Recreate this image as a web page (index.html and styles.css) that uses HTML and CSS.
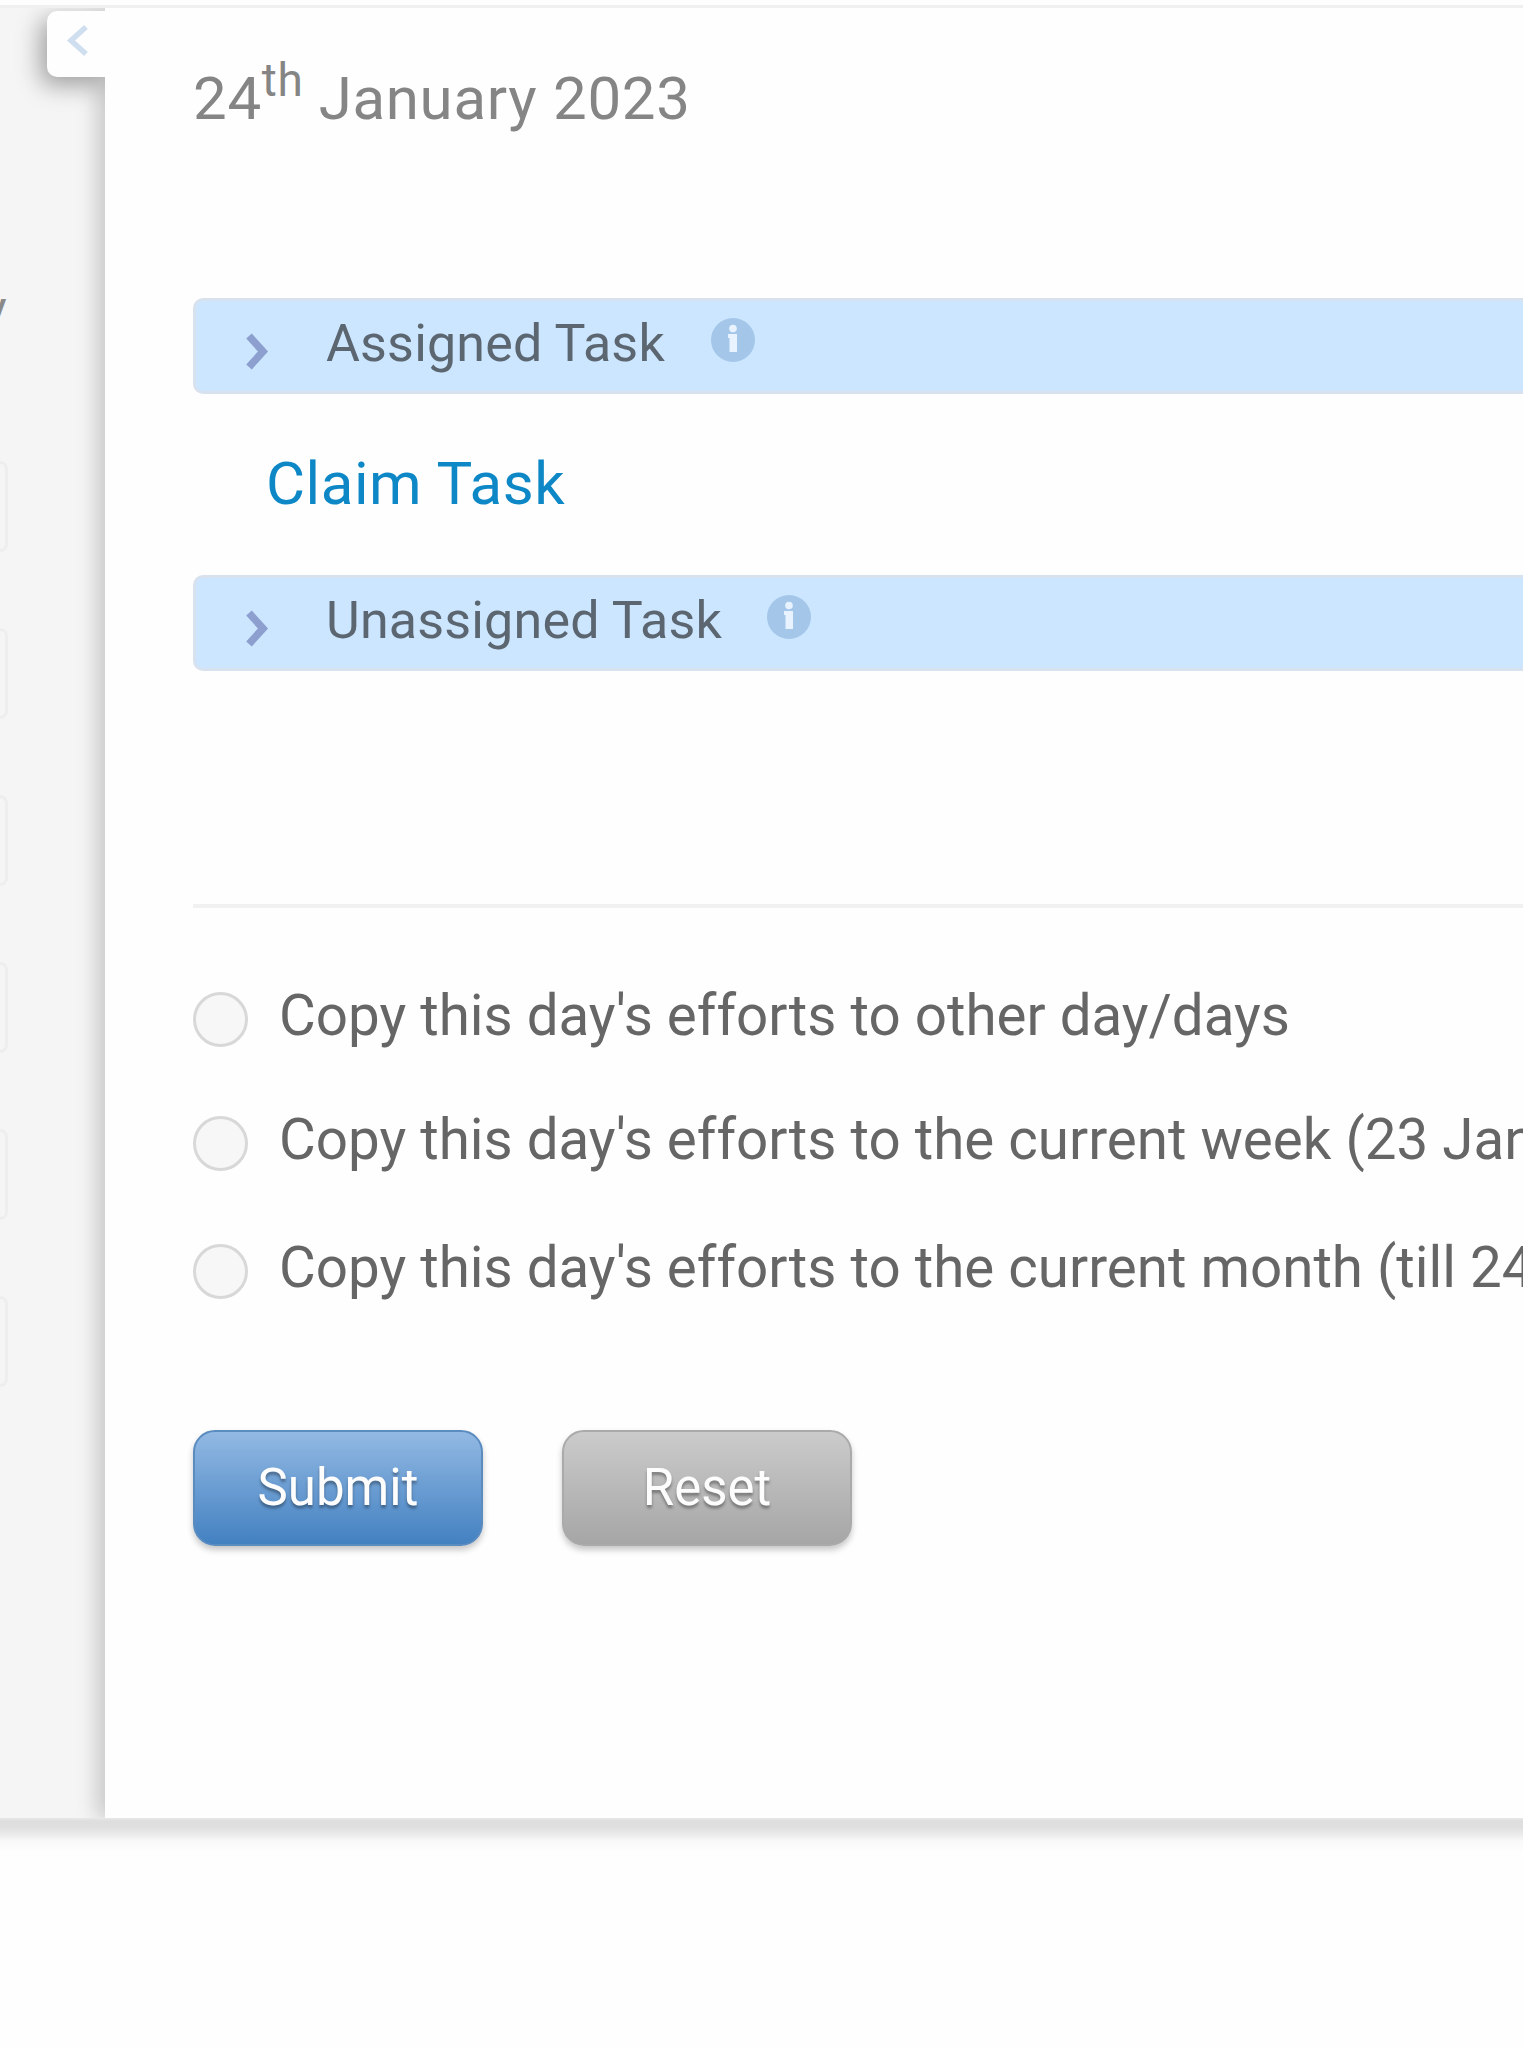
FILE: index.html
```html
<!DOCTYPE html>
<html lang="en">
<head>
<meta charset="utf-8">
<title>Timesheet</title>
<link rel="stylesheet" href="styles.css">
</head>
<body>
<div class="frame">
  <aside class="sidebar">
    <div class="sidebar-label"><span>Day</span></div>
    <div class="fields">
      <div class="field"></div>
      <div class="field"></div>
      <div class="field"></div>
      <div class="field"></div>
      <div class="field"></div>
      <div class="field"></div>
    </div>
  </aside>
  <main class="panel">
    <div class="collapse">
      <svg width="24" height="36" viewBox="0 0 24 36"><path d="M20 4L5 17.5L20 31" fill="none" stroke="#cfdfef" stroke-width="5.5"/></svg>
    </div>
    <h1 class="date"><span>24</span><sup>th</sup><span class="month">January 2023</span></h1>
    <section class="bar">
      <svg class="chevron" width="28" height="40" viewBox="0 0 28 40"><path d="M5 4L19 19.500L5 35" fill="none" stroke="#8c9fcf" stroke-width="7.500"/></svg>
      <span class="bar-title assigned">Assigned Task</span>
      <svg class="info" width="46" height="46" viewBox="0 0 46 46"><circle cx="23" cy="23" r="22" fill="#a3c6e9"/><circle cx="23" cy="11.500" r="3.800" fill="#e8f3ff"/><path d="M18 17H27V35H19.500V21H18Z" fill="#e8f3ff"/></svg>
    </section>
    <a class="claim">Claim Task</a>
    <section class="bar">
      <svg class="chevron" width="28" height="40" viewBox="0 0 28 40"><path d="M5 4L19 19.500L5 35" fill="none" stroke="#8c9fcf" stroke-width="7.500"/></svg>
      <span class="bar-title unassigned">Unassigned Task</span>
      <svg class="info" width="46" height="46" viewBox="0 0 46 46"><circle cx="23" cy="23" r="22" fill="#a3c6e9"/><circle cx="23" cy="11.500" r="3.800" fill="#e8f3ff"/><path d="M18 17H27V35H19.500V21H18Z" fill="#e8f3ff"/></svg>
    </section>
    <div class="rule"></div>
    <div class="options">
      <label class="option"><i class="radio"></i><span>Copy this day's efforts to other day/days</span></label>
      <label class="option"><i class="radio"></i><span>Copy this day's efforts to the current week (23 Jan</span></label>
      <label class="option"><i class="radio"></i><span>Copy this day's efforts to the current month (till 24</span></label>
    </div>
    <div class="actions">
      <button class="btn submit">Submit</button>
      <button class="btn reset">Reset</button>
    </div>
  </main>
</div>
<div class="frame-shadow"></div>
</body>
</html>
```
FILE: styles.css
```css
* { box-sizing: border-box; }
body {
  margin: 0;
  height: 2048px;
  padding-top: 5px;
  overflow: hidden;
  background: #fefefe;
  font-family: Roboto, "Liberation Sans", sans-serif;
  color: #666;
}
svg { display: block; flex: none; }
.frame {
  display: flex;
  height: 1813px;
  border-top: 3px solid #f0f0f0;
}
.frame-shadow {
  height: 34px;
  background: linear-gradient(#e8e8e8, #dedede 3px, #dfdfdf 9px, #ececec 17px, #f9f9f9 23px, #fefefe);
}
.sidebar {
  flex: none;
  width: 105px;
  padding-top: 272px;
  background: #f5f5f5;
  overflow: hidden;
}
.sidebar-label {
  display: flex;
  justify-content: flex-end;
  width: 6px;
  height: 50px;
  line-height: 50px;
  font-size: 32px;
  font-weight: 700;
  color: #8a8a8a;
}
.fields {
  display: flex;
  flex-direction: column;
  gap: 76px;
  padding-top: 131px;
}
.field {
  width: 8px;
  height: 91px;
  border: 3px solid #eee;
  border-left: 0;
  border-radius: 0 9px 9px 0;
}
.panel {
  position: relative;
  flex: 1;
  min-width: 0;
  padding: 30px 0 0 88px;
  background: #fefefe;
  box-shadow: -8px 0 20px rgba(0, 0, 0, .19);
  clip-path: inset(0 0 0 -105px);
}
.collapse {
  position: absolute;
  left: -58px;
  top: 3px;
  width: 60px;
  height: 66px;
  padding: 12px 0 0 19px;
  background: #fefefe;
  border-radius: 10px 0 0 10px;
  box-shadow: -6px 8px 24px rgba(0, 0, 0, .36);
  clip-path: inset(-40px 2px -50px -50px);
}
.date {
  display: flex;
  margin: 0;
  height: 120px;
  line-height: 121px;
  font-size: 60px;
  font-weight: 400;
  letter-spacing: .7px;
  color: #858585;
}
.date sup { font-size: 46px; line-height: 84px; }
.month { margin-left: 15px; }
.bar {
  display: flex;
  align-items: flex-start;
  width: 1400px;
  height: 96px;
  padding-left: 48px;
  background: #cce6ff;
  border: 3px solid #d8e2ee;
  border-radius: 10px;
}
.date + .bar { margin-top: 140px; }
.chevron { margin-top: 31px; }
.bar-title {
  margin-left: 54px;
  line-height: 86px;
  font-size: 52px;
  letter-spacing: .18px;
  color: #5b6670;
  white-space: nowrap;
}
.assigned { width: 384px; }
.unassigned { width: 440px; }
.info { margin-top: 16px; }
.claim {
  display: block;
  height: 181px;
  padding-left: 73px;
  line-height: 180px;
  font-size: 60px;
  letter-spacing: .55px;
  color: #0d87c5;
}
.rule { margin-top: 233px; height: 4px; background: #f1f1f1; }
.options {
  display: grid;
  grid-template-rows: 124px 128px 124px;
  padding-top: 46px;
}
.option {
  display: flex;
  align-items: flex-start;
  gap: 31px;
  line-height: 124px;
  font-size: 56.5px;
  white-space: nowrap;
}
.radio {
  flex: none;
  width: 55px;
  height: 55px;
  margin-top: 38px;
  border: 3px solid #d8d8d8;
  border-radius: 50%;
  background: #f7f7f7;
}
.actions { display: flex; gap: 79px; padding-top: 100px; }
.btn {
  width: 290px;
  height: 116px;
  padding: 0;
  border: 2px solid #5b8cc0;
  border-radius: 22px;
  font: 400 51px/112px Roboto, sans-serif;
  color: #fdfdfd;
  text-shadow: 0 3px 3px rgba(0, 0, 0, .35);
  box-shadow: 0 4px 6px rgba(0, 0, 0, .22);
}
.submit { background: linear-gradient(#92b9e3, #4381c1); }
.reset { background: linear-gradient(#cbcbcb, #a6a6a6); border-color: #aaa; }
```
